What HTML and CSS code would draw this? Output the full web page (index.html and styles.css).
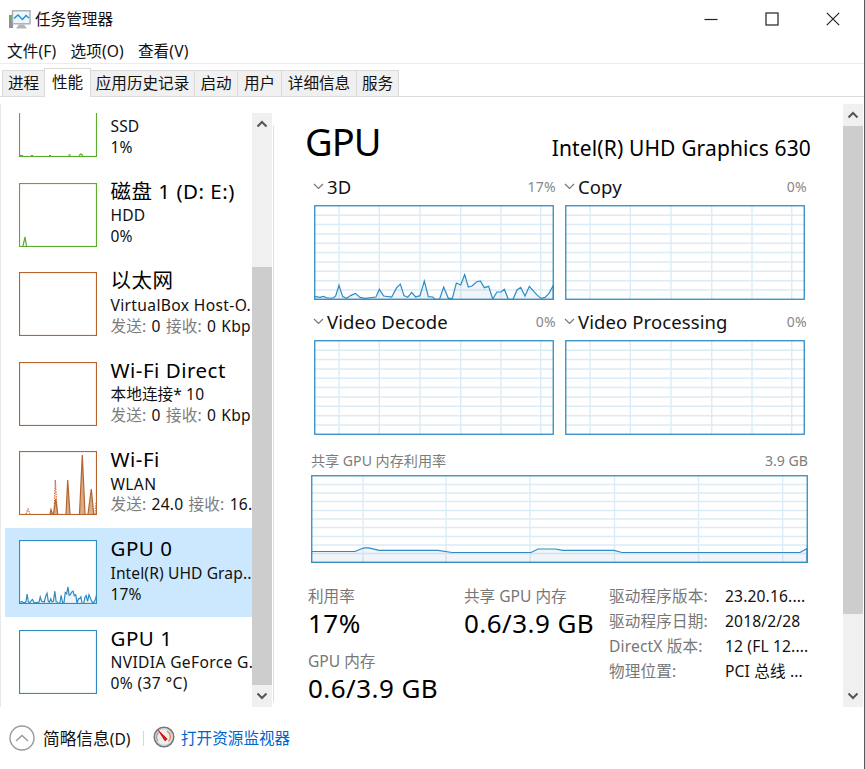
FILE: index.html
```html
<!DOCTYPE html>
<html lang="zh-CN">
<head>
    <meta charset="UTF-8">
    <meta name="viewport" content="width=device-width, initial-scale=1.0">
    <title>任务管理器</title>
    <link rel="stylesheet" href="styles.css">
</head>
<body>
    <!-- shared chart shapes -->
    <svg class="defs" width="0" height="0">
        <symbol id="grid" viewBox="0 0 240 95" preserveAspectRatio="none">
            <path class="grid-line" d="M25 0V95M65.3 0V95M106 0V95M146.7 0V95M187 0V95M226.7 0V95M0 10.2H240M0 19.5H240M0 29H240M0 38.2H240M0 47.5H240M0 57H240M0 66.2H240M0 75.7H240M0 85H240"/>
        </symbol>
        <symbol id="load" viewBox="0 0 720 285" preserveAspectRatio="none">
            <path class="load-line" d="M0 274L18 277L28 274L40 279L58 279L65 273L75 241L86 275L98 280L111 271L124 265L138 277L153 280L186 276L196 253L209 273L233 276L248 248L259 237L270 272L281 277L293 262L305 276L318 272L331 228L343 275L356 276L364 283L377 282L389 246L403 280L415 280L427 234L440 240L452 209L463 246L474 243L487 231L499 228L511 248L524 244L536 282L549 261L561 261L571 253L583 283L597 283L609 255L620 247L633 273L646 244L668 269L681 280L693 277L705 265L718 241V285H0Z"/>
        </symbol>
    </svg>

    <div class="window">
        <div class="titlebar">
            <svg class="app-icon" viewBox="0 0 22 19">
                <rect x="0" y="5" width="4" height="13" fill="#8b9196"/>
                <rect x="0.8" y="6" width="2" height="2" fill="#35d435"/>
                <rect x="3.5" y="0.8" width="17.5" height="13" fill="#eef6fb" stroke="#a7adb1" stroke-width="1.4"/>
                <path d="M5 8.5L9 5L13.5 9.500L17 5.500L20 8" fill="none" stroke="#1f8fcf" stroke-width="1.4"/>
                <path d="M10 14.500H15L18 18.500H7Z" fill="#b1b6b9"/>
            </svg>
            <span class="title">任务管理器</span>
            <div class="controls">
                <svg viewBox="0 0 14 14"><path d="M0.500 7.500H13.500"/></svg>
                <svg viewBox="0 0 14 14"><rect x="1" y="1" width="12" height="12"/></svg>
                <svg viewBox="0 0 14 14"><path d="M0.800 0.800L13.200 13.200M13.200 0.800L0.800 13.200"/></svg>
            </div>
        </div>
        <div class="menu">
            <span>文件(F)</span>
            <span>选项(O)</span>
            <span>查看(V)</span>
        </div>
        <div class="tabs">
            <div class="tab tab-process">进程</div>
            <div class="tab active">性能</div>
            <div class="tab tab-history">应用历史记录</div>
            <div class="tab tab-startup">启动</div>
            <div class="tab tab-users">用户</div>
            <div class="tab tab-details">详细信息</div>
            <div class="tab tab-services">服务</div>
        </div>

        <div class="main">
            <div class="sidebar">
                <div class="list">
                    <div class="item">
                        <svg class="thumb disk" viewBox="0 0 78 64"><rect class="frame" x="0.500" y="0.500" width="77" height="63"/><path d="M1 62.500H4M12 62.500H14M30 62.500H32M49 62H52M60 62.500L62 61L64 62.500"/></svg>
                        <div class="info">
                            <div class="name"></div>
                            <div class="line">SSD</div>
                            <div class="line">1%</div>
                        </div>
                    </div>
                    <div class="item">
                        <svg class="thumb disk" viewBox="0 0 78 64"><rect class="frame" x="0.500" y="0.500" width="77" height="63"/><path d="M4 63L6 54L7.500 63"/></svg>
                        <div class="info">
                            <div class="name">磁盘 1 (D: E:)</div>
                            <div class="line">HDD</div>
                            <div class="line">0%</div>
                        </div>
                    </div>
                    <div class="item">
                        <svg class="thumb net" viewBox="0 0 78 64"><rect class="frame" x="0.500" y="0.500" width="77" height="63"/></svg>
                        <div class="info">
                            <div class="name">以太网</div>
                            <div class="line wide">VirtualBox Host-O.</div>
                            <div class="line rate"><i>发送:</i> 0 <i>接收:</i> 0 Kbp</div>
                        </div>
                    </div>
                    <div class="item">
                        <svg class="thumb net" viewBox="0 0 78 64"><rect class="frame" x="0.500" y="0.500" width="77" height="63"/></svg>
                        <div class="info">
                            <div class="name">Wi-Fi Direct</div>
                            <div class="line">本地连接* 10</div>
                            <div class="line rate"><i>发送:</i> 0 <i>接收:</i> 0 Kbp</div>
                        </div>
                    </div>
                    <div class="item">
                        <svg class="thumb net" viewBox="0 0 78 64">
                            <rect class="frame" x="0.500" y="0.500" width="77" height="63"/>
                            <path class="dotted" d="M7 63L9 58L11 63M35 63L36.300 29L38.300 63M76 63L77 52"/>
                            <path class="filled" d="M31 63L32 58.500L33.500 63M34.500 63L36.700 48L38.700 63M47 63L48.700 29L51 63M60.500 63L63.300 4L66 63M69 63L72.300 38L74.700 63"/>
                        </svg>
                        <div class="info">
                            <div class="name">Wi-Fi</div>
                            <div class="line wide">WLAN</div>
                            <div class="line rate"><i>发送:</i> 24.0 <i>接收:</i> 16.</div>
                        </div>
                    </div>
                    <div class="item selected">
                        <svg class="thumb gpu" viewBox="0 0 78 64"><rect class="frame" x="0.500" y="0.500" width="77" height="63"/><use href="#load" x="0" y="0" width="78" height="64"/></svg>
                        <div class="info">
                            <div class="name">GPU 0</div>
                            <div class="line">Intel(R) UHD Grap..</div>
                            <div class="line">17%</div>
                        </div>
                    </div>
                    <div class="item">
                        <svg class="thumb gpu" viewBox="0 0 78 64"><rect class="frame" x="0.500" y="0.500" width="77" height="63"/></svg>
                        <div class="info">
                            <div class="name">GPU 1</div>
                            <div class="line wide">NVIDIA GeForce G.</div>
                            <div class="line wide">0% (37 °C)</div>
                        </div>
                    </div>
                </div>
                <div class="scrollbar scroll-left">
                    <svg class="arrow" viewBox="0 0 12 8"><path d="M1.500 6.500L6 2L10.500 6.500"/></svg>
                    <div class="track"><div class="bar"></div></div>
                    <svg class="arrow" viewBox="0 0 12 8"><path d="M1.500 1.500L6 6L10.500 1.500"/></svg>
                </div>
                <div class="splitter"></div>
            </div>

            <div class="detail">
                <div class="heading">
                    <h1>GPU</h1>
                    <span class="model">Intel(R) UHD Graphics 630</span>
                </div>
                <div class="engines">
                    <div class="engine">
                        <div class="engine-head">
                            <svg class="chevron" viewBox="0 0 11 7"><path d="M1 1L5.500 5.500L10 1"/></svg>
                            <span class="engine-name">3D</span>
                            <span class="pct">17%</span>
                        </div>
                        <svg class="chart" viewBox="0 0 240 95"><use href="#grid" width="240" height="95"/><use href="#load" width="240" height="95"/><rect class="frame" x="0.750" y="0.750" width="238.500" height="93.500"/></svg>
                    </div>
                    <div class="engine">
                        <div class="engine-head">
                            <svg class="chevron" viewBox="0 0 11 7"><path d="M1 1L5.500 5.500L10 1"/></svg>
                            <span class="engine-name">Copy</span>
                            <span class="pct">0%</span>
                        </div>
                        <svg class="chart" viewBox="0 0 240 95"><use href="#grid" width="240" height="95"/><rect class="frame" x="0.750" y="0.750" width="238.500" height="93.500"/></svg>
                    </div>
                    <div class="engine">
                        <div class="engine-head">
                            <svg class="chevron" viewBox="0 0 11 7"><path d="M1 1L5.500 5.500L10 1"/></svg>
                            <span class="engine-name">Video Decode</span>
                            <span class="pct">0%</span>
                        </div>
                        <svg class="chart" viewBox="0 0 240 95"><use href="#grid" width="240" height="95"/><rect class="frame" x="0.750" y="0.750" width="238.500" height="93.500"/></svg>
                    </div>
                    <div class="engine">
                        <div class="engine-head">
                            <svg class="chevron" viewBox="0 0 11 7"><path d="M1 1L5.500 5.500L10 1"/></svg>
                            <span class="engine-name">Video Processing</span>
                            <span class="pct">0%</span>
                        </div>
                        <svg class="chart" viewBox="0 0 240 95"><use href="#grid" width="240" height="95"/><rect class="frame" x="0.750" y="0.750" width="238.500" height="93.500"/></svg>
                    </div>
                </div>

                <div class="memory">
                    <div class="memory-head">
                        <span>共享 GPU 内存利用率</span>
                        <span class="size">3.9 GB</span>
                    </div>
                    <svg class="memory-chart" viewBox="0 0 497 88">
                        <path class="grid-line" d="M52 0V88M135 0V88M219 0V88M303.500 0V88M387.500 0V88M471.700 0V88M0 9.500H497M0 18H497M0 26.500H497M0 35.500H497M0 44H497M0 52.500H497M0 61.500H497M0 70H497M0 78.500H497"/>
                        <path class="load-line" d="M0 76.500H44L51 73.500L54 72.800H58L68 75.300H127L141 77.500H220L227 74H244L252 75.300H303L311 77.500H489L496 73.500V88H0Z"/>
                        <rect class="frame" x="0.750" y="0.750" width="495.500" height="86.500"/>
                    </svg>
                </div>

                <div class="stats">
                    <div class="stat-col first">
                        <div class="label">利用率</div>
                        <div class="value">17%</div>
                        <div class="label">GPU 内存</div>
                        <div class="value">0.6/3.9 GB</div>
                    </div>
                    <div class="stat-col second">
                        <div class="label">共享 GPU 内存</div>
                        <div class="value">0.6/3.9 GB</div>
                    </div>
                    <div class="props">
                        <span class="key">驱动程序版本:</span><span>23.20.16....</span>
                        <span class="key">驱动程序日期:</span><span>2018/2/28</span>
                        <span class="key">DirectX 版本:</span><span>12 (FL 12....</span>
                        <span class="key">物理位置:</span><span>PCI 总线 ...</span>
                    </div>
                </div>
            </div>

            <div class="scrollbar scroll-right">
                <svg class="arrow" viewBox="0 0 12 8"><path d="M1.500 6.500L6 2L10.500 6.500"/></svg>
                <div class="track"><div class="bar"></div></div>
                <svg class="arrow" viewBox="0 0 12 8"><path d="M1.500 1.500L6 6L10.500 1.500"/></svg>
            </div>
        </div>

        <div class="footer">
            <svg class="collapse" viewBox="0 0 26 26"><circle cx="13" cy="13" r="12"/><path d="M7 16L13 10.500L19 16"/></svg>
            <span class="brief">简略信息<small>(D)</small></span>
            <span class="divider"></span>
            <svg class="gauge" viewBox="0 0 22 22">
                <circle cx="11" cy="11" r="9.700" fill="#eceeed" stroke="#72767a" stroke-width="1.600"/>
                <circle cx="11" cy="11" r="8.300" fill="none" stroke="#c9cccb" stroke-width="1"/>
                <path d="M5 15A7 7 0 0 1 5.500 6.500" fill="none" stroke="#9aa5a0" stroke-width="1.200"/>
                <path d="M14 5.200A6.500 6.500 0 0 1 15.500 15.500" fill="none" stroke="#e08a55" stroke-width="1.400"/>
                <path d="M5.500 4.500L14.200 13L12 14.800Z" fill="#d3161c" stroke="#d3161c" stroke-width="1"/>
            </svg>
            <span class="link">打开资源监视器</span>
        </div>
    </div>
</body>
</html>
```
FILE: styles.css
```css
* {
    box-sizing: border-box;
}

body {
    margin: 0;
    background-color: #fff;
    color: #111;
    font-family: "Noto Sans", "Noto Sans CJK SC", sans-serif;
    font-size: 15.6px;
    white-space: nowrap;
}

svg {
    display: block;
    flex: none;
}

.defs {
    position: absolute;
}

.window {
    display: flex;
    flex-direction: column;
    width: 865px;
    height: 769px;
    border-right: 1px solid #55585c;
    overflow: hidden;
}

/* title and menu */
.titlebar {
    display: flex;
    align-items: center;
    height: 38px;
    padding: 0 24px 0 9px;
}

.app-icon {
    width: 22px;
    height: 19px;
}

.title {
    margin-left: 4px;
    padding-bottom: 2px;
}

.controls {
    display: flex;
    gap: 47px;
    margin-left: auto;
}

.controls svg {
    width: 14px;
    height: 14px;
    fill: none;
    stroke: #222;
    stroke-width: 1.2;
}

.menu {
    display: flex;
    gap: 14px;
    height: 26px;
    padding-left: 7px;
    line-height: 26px;
    letter-spacing: 0.15px;
    border-bottom: 1px solid #ececec;
}

/* tabs */
.tabs {
    display: flex;
    align-items: flex-end;
    height: 33px;
    padding-left: 2px;
    border-bottom: 1px solid #dcdcdc;
}

.tab {
    height: 26px;
    line-height: 25px;
    text-align: center;
    background-color: #f0f0f0;
    border: 1px solid #dadada;
    border-left: none;
    border-bottom: none;
}

.tab-process {
    width: 42px;
    border-left: 1px solid #dadada;
    border-right: none;
}

.tab.active {
    width: 47px;
    height: 29px;
    margin-bottom: -1px;
    line-height: 26px;
    background-color: #fff;
    border-left: 1px solid #dadada;
}

.tab-history {
    width: 104px;
}

.tab-startup {
    width: 43px;
}

.tab-users {
    width: 44px;
}

.tab-details {
    width: 75px;
}

.tab-services {
    width: 42px;
}

.main {
    display: flex;
    height: 610px;
    padding-top: 7px;
}

/* device list */
.sidebar {
    display: flex;
    width: 274px;
    padding-top: 9px;
    border-left: 1px solid #e9e9e9;
}

.list {
    width: 251px;
    padding-left: 4px;
    overflow: hidden;
}

.item {
    display: flex;
    width: 247px;
    height: 89.4px;
    padding: 12.4px 0 0 13.5px;
    overflow: hidden;
}

.item:first-child {
    margin-top: -32px;
}

.selected {
    background-color: #cce8ff;
}

.thumb {
    width: 78px;
    height: 64px;
    fill: none;
    stroke-width: 1.2;
}

.frame {
    fill: none;
}

.thumb .frame {
    fill: #fff;
}

.disk {
    stroke: #5bab2b;
}

.net {
    stroke: #b5652b;
}

.net .filled {
    fill: #d9ad8c;
}

.net .dotted {
    stroke: #dc6b3c;
    stroke-dasharray: 1.5 1;
}

.gpu {
    stroke: #2f8cc3;
}

.info {
    margin: -3px 0 0 14px;
}

.name {
    height: 25.6px;
    line-height: 22px;
    font-size: 20.5px;
    letter-spacing: 0.5px;
    color: #000;
}

.line {
    height: 20.8px;
    line-height: 21px;
    letter-spacing: 0.1px;
}

.line.wide {
    letter-spacing: 0.35px;
}

.line.rate {
    letter-spacing: 0.2px;
    word-spacing: 0.9px;
}

.line i {
    font-style: normal;
    color: #7c7c7c;
}

/* scrollbars */
.scrollbar {
    display: flex;
    flex-direction: column;
    width: 20px;
    background-color: #f0f0f0;
}

.arrow {
    width: 12px;
    height: 8px;
    margin: 7px 4px;
    fill: none;
    stroke: #555;
    stroke-width: 2;
}

.track {
    flex: 1;
}

.bar {
    background-color: #cdcdcd;
}

.scroll-left .bar {
    height: 418px;
    margin-top: 132px;
}

.scroll-right {
    width: 20px;
    margin-left: auto;
    margin-right: 1px;
}

.scroll-right .bar {
    height: 488px;
}

.splitter {
    width: 1px;
    margin: 13px 0 5px 1px;
    background-color: #dedede;
}

/* detail pane */
.detail {
    width: 569px;
    padding-left: 31px;
}

.heading {
    display: flex;
    align-items: baseline;
    height: 70px;
    width: 506px;
    padding-top: 10.5px;
    color: #000;
}

h1 {
    margin: 0;
    font-size: 38px;
    font-weight: 400;
    line-height: 52px;
    letter-spacing: -1px;
}

.model {
    margin-left: auto;
    font-size: 21px;
    letter-spacing: 0.13px;
    line-height: 48px;
}

.engines {
    display: grid;
    grid-template-columns: 240px 240px;
    column-gap: 11px;
    padding-left: 9px;
}

.engine {
    height: 135px;
}

.engine-head {
    display: flex;
    align-items: center;
    height: 31px;
    width: 242px;
    padding-bottom: 7px;
}

.chevron {
    width: 11px;
    height: 7px;
    margin-left: -1px;
    fill: none;
    stroke: #777;
    stroke-width: 1.2;
}

.engine-name {
    margin-left: 3px;
    font-size: 18.5px;
    letter-spacing: 0.1px;
}

.pct {
    margin-left: auto;
    font-size: 14px;
    letter-spacing: 0.3px;
    color: #888;
}

.chart {
    width: 240px;
    height: 95px;
}

.chart .frame,
.memory-chart .frame {
    stroke: #2f8cc3;
    stroke-width: 1.3;
}

.grid-line {
    fill: none;
    stroke: #dcecf6;
    stroke-width: 1.4;
}

.load-line {
    fill: rgba(17, 90, 160, 0.06);
    stroke: #2f8cc3;
    stroke-width: 1.2;
    vector-effect: non-scaling-stroke;
}

.memory {
    width: 497px;
    margin: 6px 0 0 6px;
}

.memory-head {
    display: flex;
    justify-content: space-between;
    height: 24.5px;
    line-height: 22px;
    font-size: 14.1px;
    color: #7c7c7c;
}

.memory-chart {
    width: 497px;
    height: 88px;
}

.stats {
    display: flex;
    padding: 21.5px 0 0 3px;
}

.label,
.key {
    color: #777;
}

.label {
    height: 24px;
    line-height: 24px;
}

.value {
    height: 41px;
    line-height: 30px;
    font-size: 26px;
    letter-spacing: 0.45px;
    color: #000;
}

.first {
    width: 156px;
}

.second {
    width: 145px;
}

.props {
    display: grid;
    grid-template-columns: 116px 90px;
    grid-auto-rows: 25px;
    line-height: 25px;
    letter-spacing: 0.15px;
}

/* footer */
.footer {
    display: flex;
    align-items: center;
    height: 62px;
    padding-left: 9px;
}

.collapse {
    width: 26px;
    height: 26px;
    fill: none;
    stroke: #999;
    stroke-width: 1.4;
}

.brief {
    width: 99px;
    padding-left: 8px;
    font-size: 16.7px;
}

.brief small {
    font-size: 15.6px;
}

.divider {
    width: 1px;
    height: 15px;
    margin-left: 9px;
    background-color: #d6d6d6;
}

.gauge {
    width: 22px;
    height: 22px;
    margin-left: 9px;
    margin-bottom: 2px;
}

.link {
    margin-left: 6px;
    padding-bottom: 1px;
    color: #0066cc;
}
```
